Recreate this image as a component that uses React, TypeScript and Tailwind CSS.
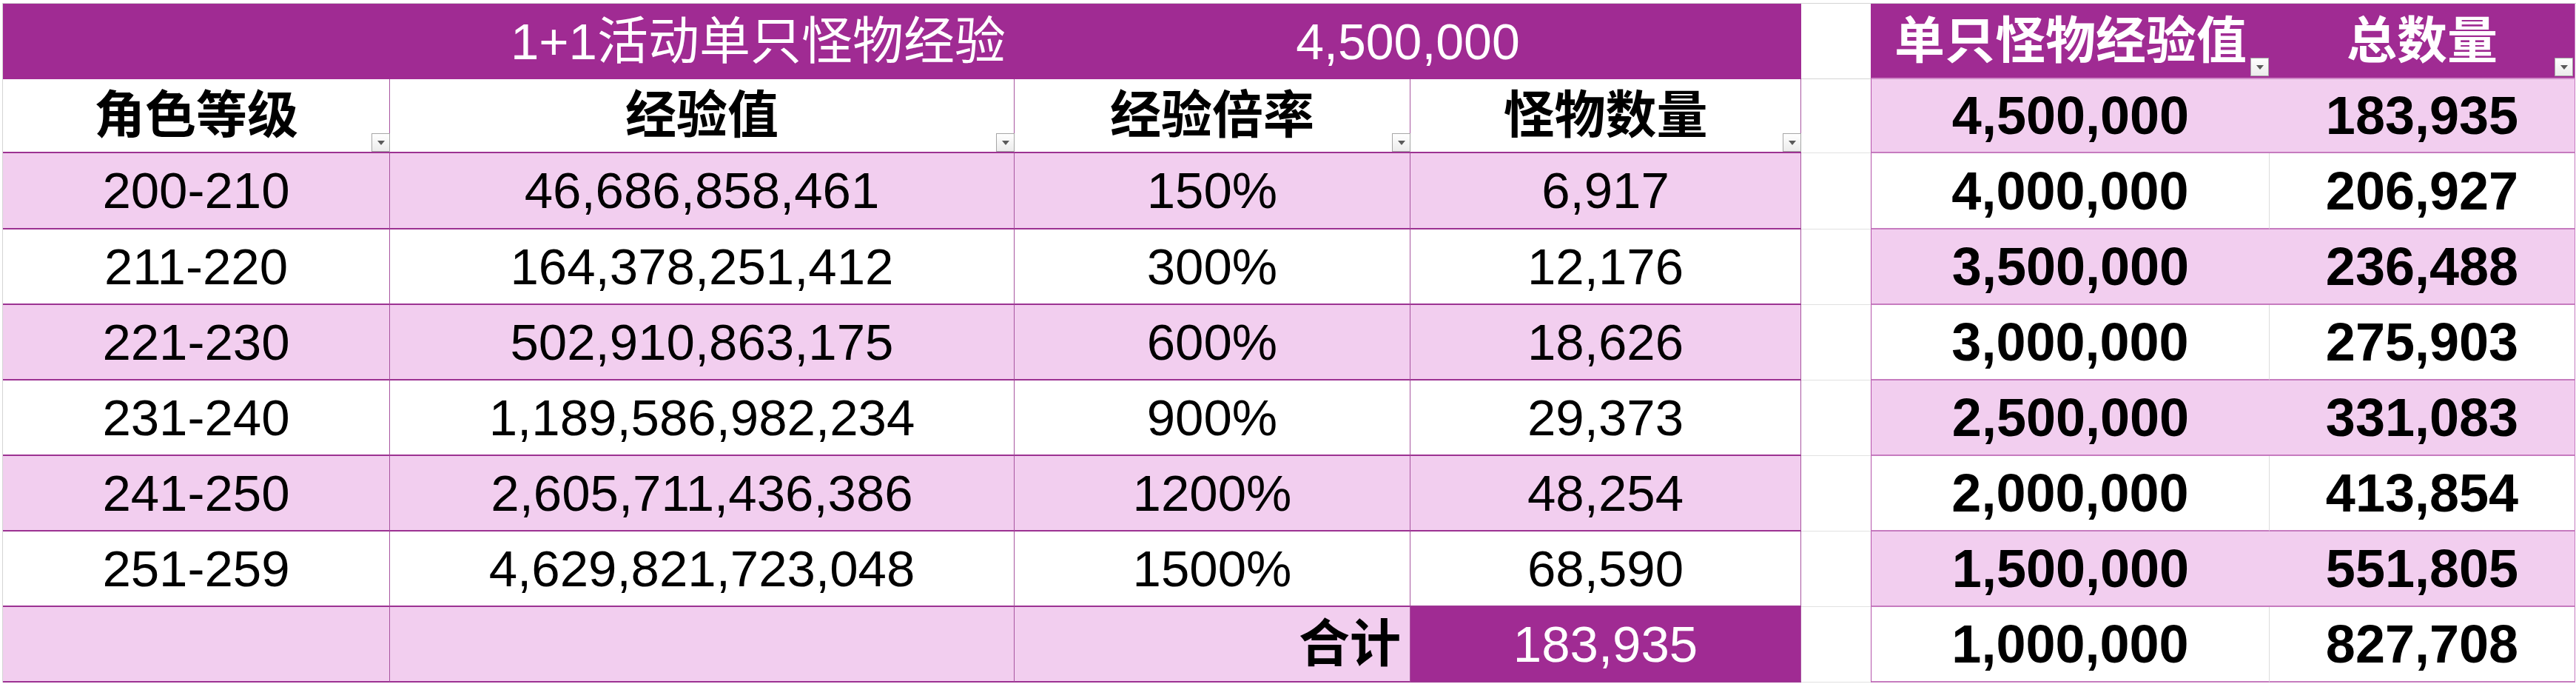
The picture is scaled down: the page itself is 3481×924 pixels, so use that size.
import React from 'react';

const FONT = { fontFamily: '"Liberation Sans", "Noto Sans CJK SC", sans-serif' };

const FilterButton = ({ className }: { className: string }) => (
  <div
    className={`absolute w-[25px] h-[25px] border border-[#a6a6a6] bg-linear-to-b from-white to-[#ececec] flex items-center justify-center ${className}`}
  >
    <svg width="10" height="6" viewBox="0 0 10 6">
      <path d="M0 0 H10 L5 6 Z" fill="#5a5a5a" />
    </svg>
  </div>
);

const App = () => {
  const levels = [
    ['200-210', '46,686,858,461', '150%', '6,917'],
    ['211-220', '164,378,251,412', '300%', '12,176'],
    ['221-230', '502,910,863,175', '600%', '18,626'],
    ['231-240', '1,189,586,982,234', '900%', '29,373'],
    ['241-250', '2,605,711,436,386', '1200%', '48,254'],
    ['251-259', '4,629,821,723,048', '1500%', '68,590'],
  ];

  const totals = [
    ['4,500,000', '183,935'],
    ['4,000,000', '206,927'],
    ['3,500,000', '236,488'],
    ['3,000,000', '275,903'],
    ['2,500,000', '331,083'],
    ['2,000,000', '413,854'],
    ['1,500,000', '551,805'],
    ['1,000,000', '827,708'],
  ];

  // right table rows 2..9 (index 0 = alongside the left header row)
  const rightCells = (i: number) => {
    const pink = i % 2 === 0;
    const [exp, count] = totals[i];
    return (
      <>
        <div className="border-b border-[#e1e1e1] bg-white" />
        <div
          className={`flex items-center justify-center border-l border-b-2 border-l-[#b453aa] border-b-[#c67bbf] text-[72px] font-bold leading-none text-black ${pink ? 'bg-[#f2ceef]' : 'bg-white border-r border-r-[#dcdcdc]'}`}
        >
          {exp}
        </div>
        <div
          className={`flex items-center justify-center border-r border-b-2 border-r-[#c67bbf] border-b-[#c67bbf] text-[72px] font-bold leading-none text-black ${pink ? 'bg-[#f2ceef]' : 'bg-white'}`}
        >
          {count}
        </div>
      </>
    );
  };

  const cellBase = 'flex items-center justify-center border-r border-b-2 border-r-[#a855a0] border-b-[#9c3292] text-[69px] leading-none text-black';

  return (
    <div className="w-[3481px] h-[924px] bg-white pl-[3px] pt-[4px]" style={FONT}>
      <div className="grid grid-cols-[523px_844px_535px_528px_94px_539px_413px] grid-rows-[102px_100px_103px_102px_102px_102px_102px_102px_102px] border-t border-l border-[#d4d4d4]">
        {/* title row */}
        <div className="col-span-2 flex items-center justify-end pr-[12px] bg-[#a02b93] text-white text-[69px] leading-none">
          1+1活动单只怪物经验
        </div>
        <div className="col-span-2 flex items-center justify-center bg-[#a02b93] text-white text-[68px] leading-none">
          4,500,000
        </div>
        <div className="border-b border-[#d4d4d4] bg-white" />
        <div className="relative flex items-center justify-center border-l border-b-2 border-l-[#a02b93] border-b-[#d08ac9] bg-[#a02b93] text-white text-[68px] font-bold leading-none">
          单只怪物经验值
          <FilterButton className="right-[1px] bottom-[2px]" />
        </div>
        <div className="relative flex items-center justify-center border-r border-b-2 border-r-[#c67bbf] border-b-[#d08ac9] bg-[#a02b93] text-white text-[68px] font-bold leading-none">
          总数量
          <FilterButton className="right-[2px] bottom-[2px]" />
        </div>

        {/* header row */}
        {['角色等级', '经验值', '经验倍率', '怪物数量'].map((h) => (
          <div key={h} className={`relative bg-white font-bold text-[68px] ${cellBase}`}>
            {h}
            <FilterButton className="right-[-1px] bottom-0" />
          </div>
        ))}
        {rightCells(0)}

        {/* data rows */}
        {levels.map((row, i) => (
          <React.Fragment key={row[0]}>
            {row.map((v, j) => (
              <div key={j} className={`${cellBase} ${i % 2 === 0 ? 'bg-[#f2ceef]' : 'bg-white'}`}>
                {v}
              </div>
            ))}
            {rightCells(i + 1)}
          </React.Fragment>
        ))}

        {/* total row */}
        <div className={`${cellBase} bg-[#f2ceef]`} />
        <div className={`${cellBase} bg-[#f2ceef]`} />
        <div className={`${cellBase} bg-[#f2ceef] justify-end pr-[12px] font-bold text-[68px]`}>合计</div>
        <div className="flex items-center justify-center border-r border-b-2 border-r-[#a855a0] border-b-[#9c3292] bg-[#a02b93] text-white text-[69px] leading-none">
          183,935
        </div>
        {rightCells(7)}
      </div>
    </div>
  );
};

export default App;
